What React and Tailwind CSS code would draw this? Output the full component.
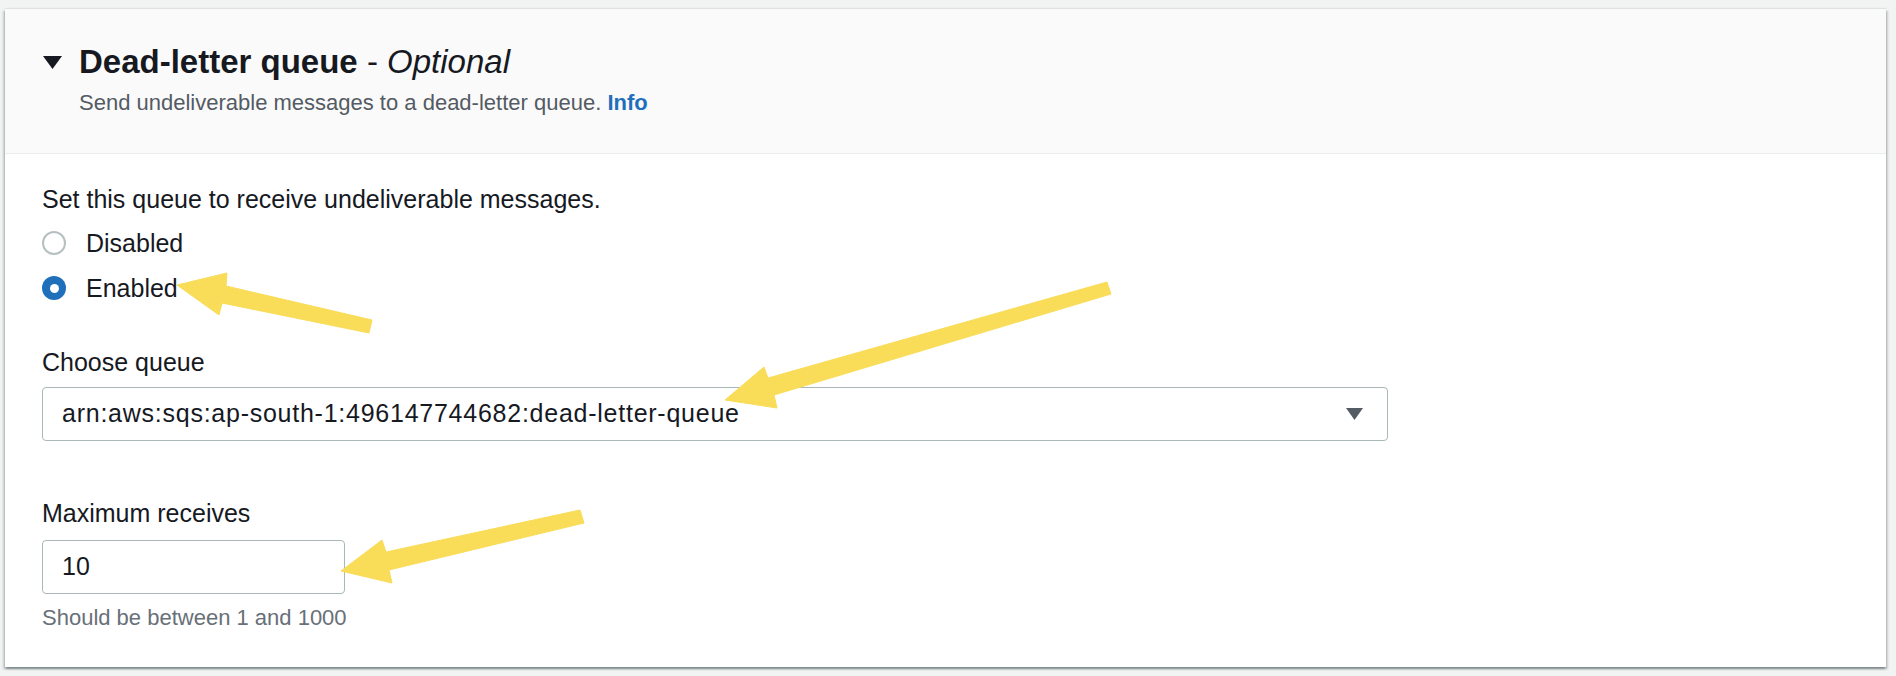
import React, { useState } from 'react'

// Dead-letter queue settings panel (SQS "Edit queue" form section)

const font = { fontFamily: '"Liberation Sans", Arial, sans-serif' }

// Yellow callout arrows drawn on top of the form
const arrows = [
  '177,285 227,273 226,286 372,320 369,333 222,303 219,315',
  '725,400 764,367 768,378 1107,282 1111,294 774,395 777,408',
  '341,571 382,540 386,552 580,510 584,523 389,570 392,583',
]

function Radio({ checked, label, onClick }) {
  return (
    <button type="button" onClick={onClick} className="flex items-center gap-[20px] h-[36px] text-left">
      {checked ? (
        <span className="w-[24px] h-[24px] rounded-full bg-[#1f6fba] flex items-center justify-center">
          <span className="w-[9px] h-[9px] rounded-full bg-white" />
        </span>
      ) : (
        <span className="w-[24px] h-[24px] rounded-full border-2 border-[#b6c0c1] bg-white" />
      )}
      <span className="text-[25px] leading-[36px] text-[#16191f]">{label}</span>
    </button>
  )
}

export default function App() {
  const [enabled, setEnabled] = useState(true)

  return (
    <div className="relative w-[1896px] h-[676px] bg-[#f2f3f3] pt-[9px] pl-[5px] overflow-hidden" style={font}>
      <div className="w-[1881px] h-[658px] bg-white shadow-[0_2px_2px_0_rgba(0,28,36,0.3),2px_2px_2px_0_rgba(0,28,36,0.15),-2px_2px_2px_0_rgba(0,28,36,0.15),0_-1px_1px_0_rgba(0,28,36,0.08)]">
        {/* header */}
        <div className="h-[145px] bg-[#fafafa] border-b border-[#eaeded] pt-[33px] pl-[38px]">
          <div className="flex items-center gap-[17px] h-[40px]">
            <svg width="19" height="13" viewBox="0 0 19 13">
              <polygon points="0,0 19,0 9.5,13" fill="#16191f" />
            </svg>
            <h2 className="text-[33px] leading-[40px] text-[#16191f]">
              <span className="font-bold">Dead-letter queue</span>
              <span> - </span>
              <span className="italic">Optional</span>
            </h2>
          </div>
          <p className="mt-[6px] pl-[36px] text-[22px] leading-[29px] text-[#545b64]">
            Send undeliverable messages to a dead-letter queue.{' '}
            <a className="font-bold text-[#1f6fba]">Info</a>
          </p>
        </div>

        {/* body */}
        <div className="pt-[27px] pl-[37px]">
          <p className="text-[25px] leading-[36px] text-[#16191f]">Set this queue to receive undeliverable messages.</p>
          <div className="mt-[8px] flex flex-col gap-[9px]">
            <Radio label="Disabled" checked={!enabled} onClick={() => setEnabled(false)} />
            <Radio label="Enabled" checked={enabled} onClick={() => setEnabled(true)} />
          </div>

          <label className="block mt-[38px] text-[25px] leading-[36px] text-[#16191f]">Choose queue</label>
          <div className="mt-[7px] w-[1346px] h-[54px] border border-[#aab7b8] rounded-[4px] flex items-center justify-between pl-[19px] pr-[24px]">
            <span className="text-[25px] tracking-[0.75px] text-[#16191f]">arn:aws:sqs:ap-south-1:496147744682:dead-letter-queue</span>
            <svg width="17" height="12" viewBox="0 0 17 12">
              <polygon points="0,0 17,0 8.5,12" fill="#545b64" />
            </svg>
          </div>

          <label className="block mt-[54px] text-[25px] leading-[36px] text-[#16191f]">Maximum receives</label>
          <div className="mt-[9px] w-[303px] h-[54px] border border-[#aab7b8] rounded-[4px] flex items-center pl-[19px]">
            <span className="text-[25px] text-[#16191f]">10</span>
          </div>
          <p className="mt-[9px] text-[22px] leading-[29px] text-[#687078]">Should be between 1 and 1000</p>
        </div>
      </div>

      <svg className="absolute inset-0 pointer-events-none" width="1896" height="676" viewBox="0 0 1896 676">
        {arrows.map((pts, i) => (
          <polygon key={i} points={pts} fill="#f9dc58" stroke="#f9dc58" strokeWidth="1" strokeLinejoin="round" />
        ))}
      </svg>
    </div>
  )
}
